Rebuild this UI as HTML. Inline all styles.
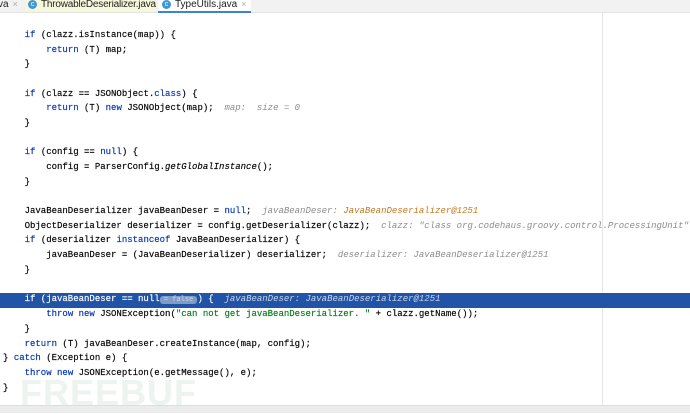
<!DOCTYPE html>
<html><head><style>
body{margin:0;width:690px;height:412px;overflow:hidden;background:#fff;position:relative;font-family:"Liberation Sans",sans-serif}
.tabs{position:absolute;left:0;top:0;width:690px;height:12px;background:#f2f2f2;border-bottom:1px solid #e4e4e4;font-size:10px;color:#222}
.tab{position:absolute;top:-3px;height:14px;line-height:14px;white-space:nowrap}
.ic{display:inline-block;width:9px;height:9px;border-radius:50%;background:#3f97d4;color:#fff;font-size:7px;line-height:9px;text-align:center;vertical-align:1px;margin-right:4px}
.x{color:#aaa;margin-left:4px;font-size:9px}
.code{position:absolute;left:3px;top:28px;font-family:"Liberation Mono",monospace;font-size:9px;line-height:14.65px;color:#000;white-space:pre;-webkit-text-stroke:0.15px currentColor}
.k{color:#0033b3}.s{color:#067d17}.c{color:#8c8c8c;font-style:italic;-webkit-text-stroke:0}.o{color:#c47a22;font-style:italic;-webkit-text-stroke:0}
.hl{position:absolute;left:0;top:293px;width:690px;height:14.5px;background:#2154a6}
.margin{position:absolute;left:602px;top:13px;width:1px;height:392px;background:#e6e6e6}
.bot{position:absolute;left:0;top:405px;width:690px;height:7px;background:#ececec;border-top:1px solid #ddd}
.wm{position:absolute;left:20px;top:372px;font:bold 36px "Liberation Sans",sans-serif;color:#edf3ef;letter-spacing:1px}
</style></head><body>
<div class="tabs">
<div class="tab" style="left:-2px">va<span class="x">×</span></div>
<div class="tab" style="left:26px;width:126px;overflow:hidden;background:#f7f7dc;padding:0 2px 0 2px;letter-spacing:-0.2px"><span class="ic">c</span>ThrowableDeserializer.java<span class="x">×</span></div>
<div class="tab" style="left:158px;padding:0 4px 0 4px;background:#fff;border-bottom:2px solid #4083c9"><span class="ic">c</span>TypeUtils.java<span class="x">×</span></div>
</div>
<div class="margin"></div>
<div class="hl"></div>
<div class="wm">FREEBUF</div>
<div class="code">    <span class="k">if</span> (clazz.isInstance(map)) {
        <span class="k">return</span> (T) map;
    }

    <span class="k">if</span> (clazz == JSONObject.<span class="k">class</span>) {
        <span class="k">return</span> (T) <span class="k">new</span> JSONObject(map);  <span class="c">map:  size = 0</span>
    }

    <span class="k">if</span> (config == <span class="k">null</span>) {
        config = ParserConfig.<i>getGlobalInstance</i>();
    }

    JavaBeanDeserializer javaBeanDeser = <span class="k">null</span>;  <span class="c">javaBeanDeser: </span><span class="o">JavaBeanDeserializer@1251</span>
    ObjectDeserializer deserializer = config.getDeserializer(clazz);  <span class="c">clazz: "class org.codehaus.groovy.control.ProcessingUnit"</span>
    <span class="k">if</span> (deserializer <span class="k">instanceof</span> JavaBeanDeserializer) {
        javaBeanDeser = (JavaBeanDeserializer) deserializer;  <span class="c">deserializer: JavaBeanDeserializer@1251</span>
    }

<span style="color:#fff">    if (javaBeanDeser == null<span style="background:#7f9bc8;color:#cfd8e8;border-radius:3px;font-size:7px;-webkit-text-stroke:0"> = false </span>) {  <i style="color:#c8d4ea;-webkit-text-stroke:0">javaBeanDeser: JavaBeanDeserializer@1251</i></span>
        <span class="k">throw new</span> JSONException(<span class="s">"can not get javaBeanDeserializer. "</span> + clazz.getName());
    }
    <span class="k">return</span> (T) javaBeanDeser.createInstance(map, config);
} <span class="k">catch</span> (Exception e) {
    <span class="k">throw new</span> JSONException(e.getMessage(), e);
}</div>
<div class="bot"></div>
</body></html>
